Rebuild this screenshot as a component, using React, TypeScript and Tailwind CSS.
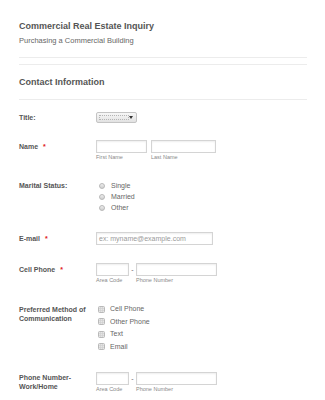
import React from 'react';

const font = { fontFamily: '"Liberation Sans", Arial, sans-serif' };

function Label({ children, required }: { children: React.ReactNode; required?: boolean }) {
  return (
    <div className="w-[77px] shrink-0 text-[7px] leading-[9px] font-bold text-[#555]">
      {children}
      {required && <span className="ml-[5px] text-[#e02020]">*</span>}
    </div>
  );
}

function Input({ w, placeholder }: { w: string; placeholder?: string }) {
  return (
    <div
      className={`${w} h-[13px] border border-[#d4d4d4] bg-white shadow-[inset_0_1px_2px_rgba(0,0,0,0.07)] pl-[2px] text-[7px] leading-[11px] text-[#9a9a9a]`}
    >
      {placeholder}
    </div>
  );
}

function Sub({ children, w }: { children: React.ReactNode; w: string }) {
  return <div className={`${w} text-[5.5px] leading-[8px] text-[#8a8a8a]`}>{children}</div>;
}

function Radio() {
  return (
    <span className="mr-[6px] inline-block h-[6px] w-[6px] rounded-full border border-[#b8b8b8] bg-gradient-to-b from-[#eee] to-[#cfcfcf]" />
  );
}

function Checkbox() {
  return (
    <svg width="7" height="7" viewBox="0 0 7 7" className="mr-[5px] shrink-0">
      <rect x="0.5" y="0.5" width="6" height="6" rx="1" fill="#e6e6e6" stroke="#b9b9b9" />
      <path d="M2.5 1v5M4.5 1v5M1 2.5h5M1 4.5h5" stroke="#cdcdcd" strokeWidth="0.6" />
    </svg>
  );
}

function PhoneFields() {
  return (
    <div>
      <div className="flex items-center">
        <Input w="w-[33px]" />
        <span className="w-[7px] text-center text-[7px] leading-[9px] text-[#666]">-</span>
        <Input w="w-[81px]" />
      </div>
      <div className="flex">
        <Sub w="w-[40px]">Area Code</Sub>
        <Sub w="w-[80px]">Phone Number</Sub>
      </div>
    </div>
  );
}

export default function App() {
  return (
    <div className="min-h-[400px] w-[325px] overflow-hidden bg-white pl-[19px] pr-[18px]" style={font}>
      {/* Header */}
      <div className="border-b border-[#ececec] pt-[20px] pb-[11px]">
        <h1 className="text-[9px] leading-[12px] font-bold text-[#555]">Commercial Real Estate Inquiry</h1>
        <p className="mt-[4px] text-[7.5px] leading-[10px] text-[#666]">Purchasing a Commercial Building</p>
      </div>

      {/* Section heading */}
      <div className="mt-[6px] border-t border-b border-[#ececec] pt-[11px] pb-[11px]">
        <h2 className="text-[9px] leading-[12px] font-bold text-[#555]">Contact Information</h2>
      </div>

      {/* Title */}
      <div className="mt-[12px] flex h-[28px] items-start">
        <div className="pt-[1px]">
          <Label>Title:</Label>
        </div>
        <div className="relative h-[11px] w-[41px] rounded-[2px] border border-[#c4c4c4] bg-gradient-to-b from-[#f7f7f7] to-[#e2e2e2]">
          <div className="absolute left-[2px] top-[2px] h-[5px] w-[30px] border-[0.5px] border-dotted border-[#b5b5b5]" />
          <svg width="4" height="3" viewBox="0 0 4 3" className="absolute right-[3px] top-[3px]">
            <path d="M0 0h4L2 3z" fill="#333" />
          </svg>
        </div>
      </div>

      {/* Name */}
      <div className="flex h-[40px] items-start">
        <div className="pt-[2px]">
          <Label required>Name</Label>
        </div>
        <div>
          <div className="flex gap-[4px]">
            <Input w="w-[51px]" />
            <Input w="w-[65px]" />
          </div>
          <div className="flex gap-[4px]">
            <Sub w="w-[51px]">First Name</Sub>
            <Sub w="w-[65px]">Last Name</Sub>
          </div>
        </div>
      </div>

      {/* Marital Status */}
      <div className="flex h-[52px] items-start">
        <div className="pt-[1px]">
          <Label>Marital Status:</Label>
        </div>
        <div className="pl-[3px] text-[7px] leading-[11px] text-[#666]">
          {['Single', 'Married', 'Other'].map((o) => (
            <div key={o} className="flex items-center">
              <Radio />
              {o}
            </div>
          ))}
        </div>
      </div>

      {/* E-mail */}
      <div className="flex h-[31px] items-start">
        <div className="pt-[2px]">
          <Label required>E-mail</Label>
        </div>
        <Input w="w-[117px]" placeholder="ex: myname@example.com" />
      </div>

      {/* Cell Phone */}
      <div className="flex h-[40px] items-start">
        <div className="pt-[2px]">
          <Label required>Cell Phone</Label>
        </div>
        <PhoneFields />
      </div>

      {/* Preferred Method */}
      <div className="flex h-[69px] items-start">
        <div className="pt-[2px]">
          <Label>
            Preferred Method of
            <br />
            Communication
          </Label>
        </div>
        <div className="pl-[2px] text-[7px] leading-[12.5px] text-[#666]">
          {['Cell Phone', 'Other Phone', 'Text', 'Email'].map((o) => (
            <div key={o} className="flex items-center">
              <Checkbox />
              {o}
            </div>
          ))}
        </div>
      </div>

      {/* Phone Number */}
      <div className="flex items-start">
        <div className="pt-[1px]">
          <Label>
            Phone Number-
            <br />
            Work/Home
          </Label>
        </div>
        <PhoneFields />
      </div>
    </div>
  );
}
